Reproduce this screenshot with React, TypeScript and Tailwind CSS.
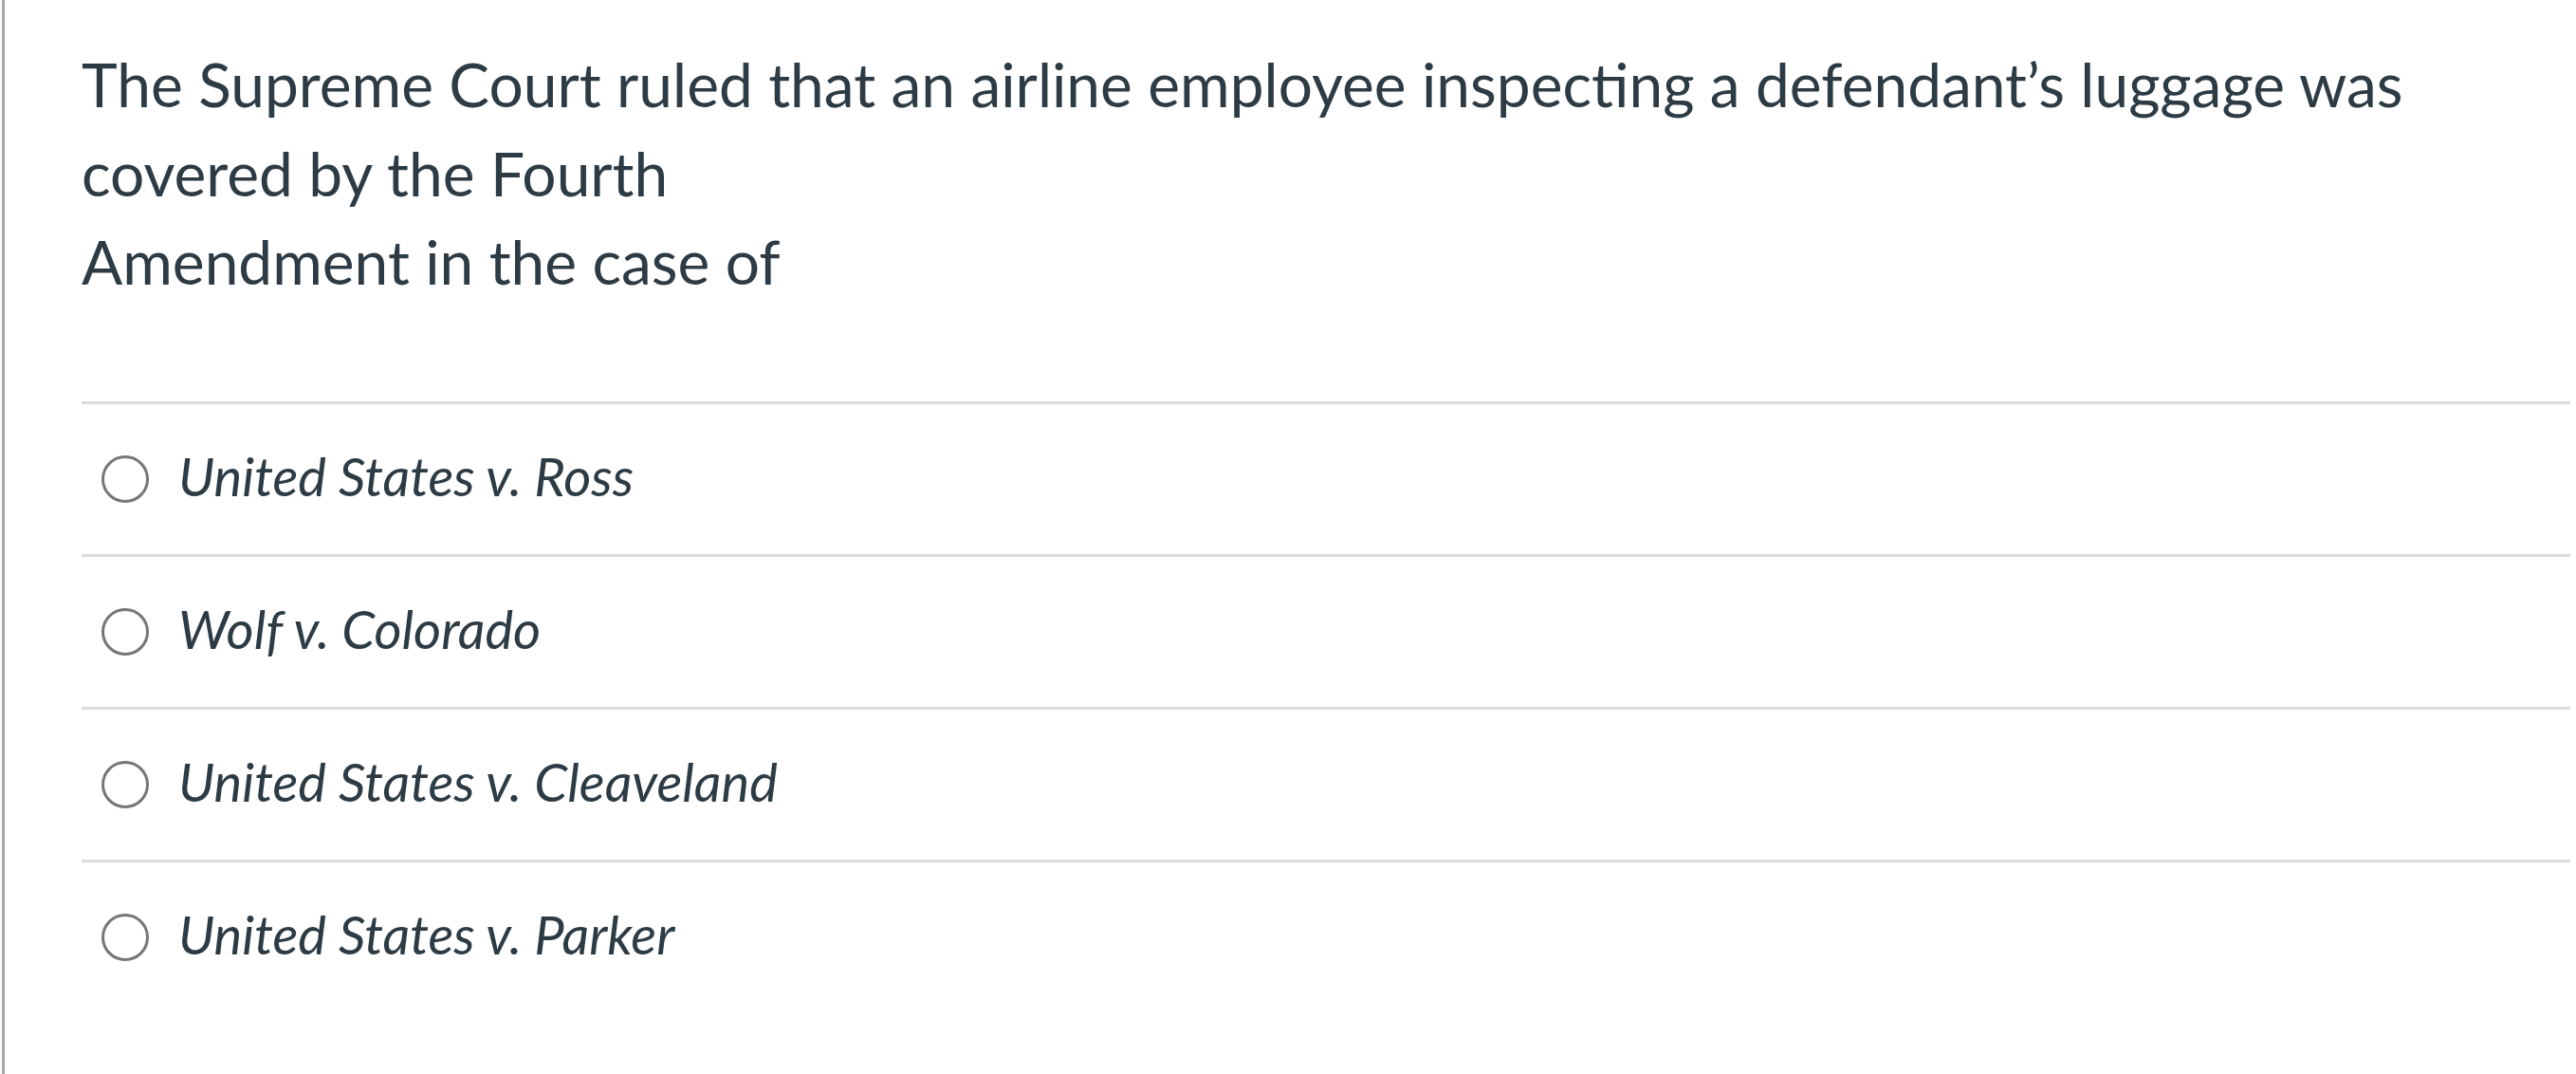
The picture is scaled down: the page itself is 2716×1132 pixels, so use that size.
import React from 'react';

const options = [
  'United States v. Ross',
  'Wolf v. Colorado',
  'United States v. Cleaveland',
  'United States v. Parker',
];

export default function App() {
  return (
    <div className="w-[2716px] h-[1132px] bg-white pl-[2px] overflow-hidden font-['Lato','Liberation_Sans',sans-serif] text-[#2d3b45]">
      <div className="h-full border-l-[3px] border-[#a8a8a8] pl-[81px] pr-[6px] pt-[42px]">
        <div className="text-[64px] leading-[93.5px]">
          <p className="whitespace-nowrap">The Supreme Court ruled that an airline employee inspecting a defendant’s luggage was</p>
          <p className="whitespace-nowrap">covered by the Fourth</p>
          <p className="whitespace-nowrap">Amendment in the case of</p>
        </div>

        <div className="mt-[100px]">
          {options.map((opt) => (
            <div key={opt} className="flex items-center h-[161px] border-t-[3px] border-[#dcdcdc]">
              <span className="ml-[21px] w-[50px] h-[50px] rounded-full border-[3px] border-[#767676] shrink-0" />
              <span className="ml-[31px] mb-[6px] italic text-[56px] whitespace-nowrap">{opt}</span>
            </div>
          ))}
        </div>
      </div>
    </div>
  );
}
